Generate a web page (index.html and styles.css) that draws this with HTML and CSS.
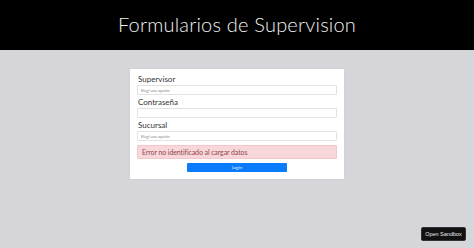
FILE: index.html
```html
<!DOCTYPE html>
<html lang="es">
<head>
<meta charset="utf-8">
<link rel="stylesheet" href="styles.css">
</head>
<body>
<header class="top">
  <h1 class="title">Formularios de Supervision</h1>
</header>
<main class="stage">
  <form class="card">
    <label class="lbl">Supervisor</label>
    <div class="field"><span class="ph">Elegí una opción</span></div>
    <label class="lbl">Contraseña</label>
    <div class="field"></div>
    <label class="lbl">Sucursal</label>
    <div class="field"><span class="ph">Elegí una opción</span></div>
    <div class="alert">Error no identificado al cargar datos</div>
    <div class="btnrow"><button class="btn" type="button">Login</button></div>
  </form>
</main>
<button class="sandbox" type="button">Open Sandbox</button>
</body>
</html>
```
FILE: styles.css
```css
html, body {
  margin: 0;
  padding: 0;
  height: 100%;
}
body {
  background: #d6d5d9;
  font-family: Lato, "Open Sans", "Liberation Sans", sans-serif;
  position: relative;
  overflow: hidden;
}
.top {
  height: 50px;
  background: #000;
  display: flex;
  align-items: center;
  justify-content: center;
}
.title {
  margin: 0;
  color: #f2f2f2;
  font-weight: 300;
  font-size: 20px;
  letter-spacing: 0.2px;
  padding-bottom: 2px;
}
.stage {
  display: flex;
  justify-content: center;
  padding-top: 19px;
}
.card {
  width: 200px;
  background: #fff;
  padding: 5px 7px 7px 7px;
  display: flex;
  flex-direction: column;
  box-shadow: 0 0 1px rgba(0,0,0,0.1);
}
.lbl {
  font-size: 8px;
  line-height: 10px;
  height: 10px;
  color: #333;
  padding-left: 1px;
  margin-bottom: 1px;
}
.field {
  height: 8px;
  border: 1px solid #e2e2e2;
  border-radius: 1px;
  margin-bottom: 2px;
  display: flex;
  align-items: center;
  padding-left: 3px;
}
.ph {
  font-size: 4px;
  color: #888;
}
.field:nth-of-type(3) {
  margin-bottom: 4px;
}
.alert {
  height: 12px;
  background: #f8d7da;
  border: 1px solid #f5c6cb;
  border-radius: 1px;
  color: #8f4850;
  font-size: 7px;
  letter-spacing: -0.1px;
  line-height: 12px;
  padding-left: 4px;
  margin-bottom: 4px;
}
.btnrow {
  display: flex;
  justify-content: center;
}
.btn {
  width: 100px;
  height: 9px;
  background: #0a7bfb;
  border: none;
  border-radius: 1px;
  color: #e6f0ff;
  font-family: inherit;
  font-size: 4.5px;
  padding: 0;
  line-height: 9px;
}
.sandbox {
  position: absolute;
  right: 8px;
  bottom: 7px;
  width: 45px;
  height: 14px;
  background: #111;
  color: #eee;
  border: 1px solid #333;
  border-radius: 2px;
  font-family: "Liberation Sans", sans-serif;
  font-size: 5.5px;
  padding: 0;
}
```
